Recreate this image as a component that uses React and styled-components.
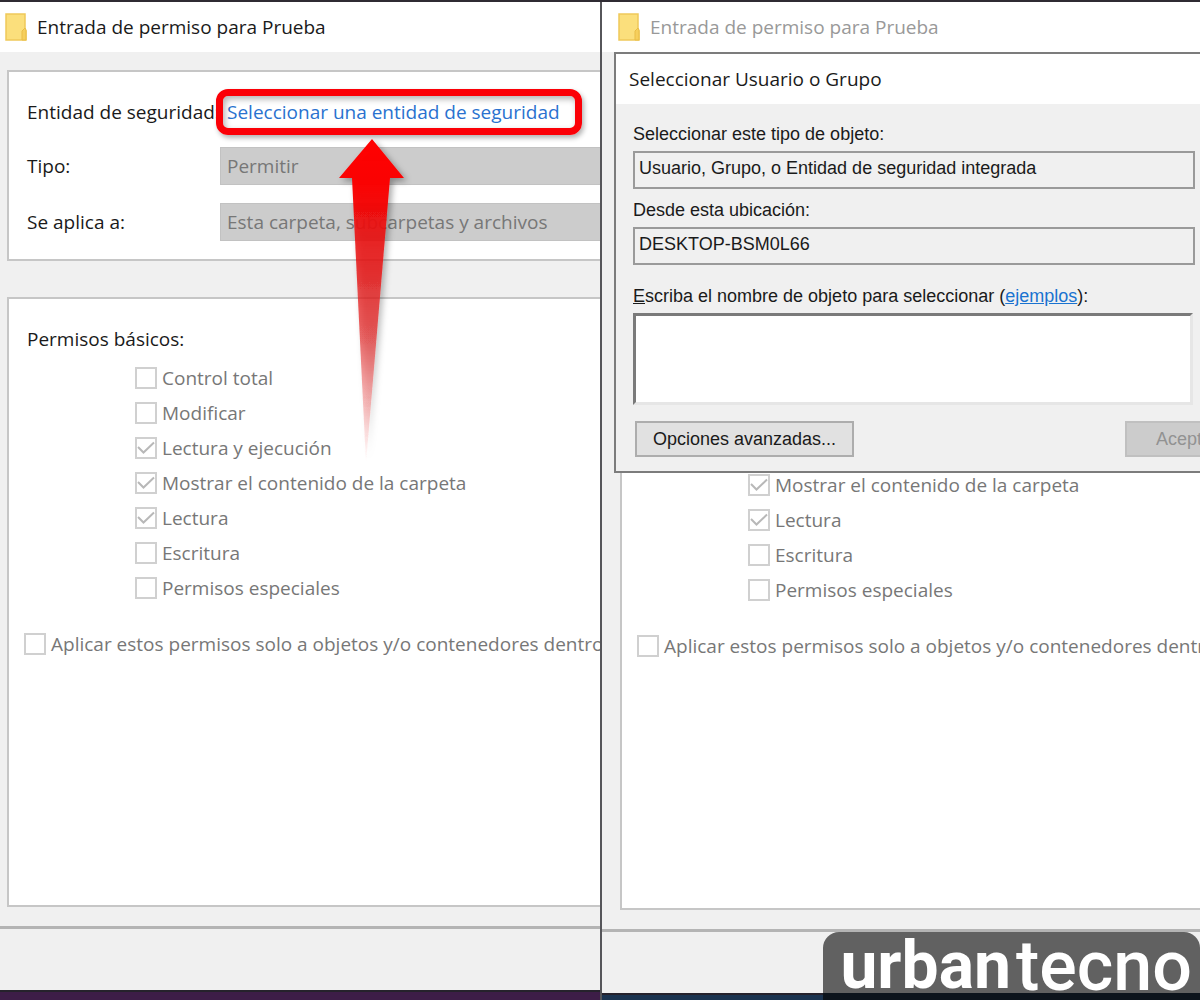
import React, { useId } from "react";
import styled, { createGlobalStyle } from "styled-components";

const GlobalStyle = createGlobalStyle`
  *, *::before, *::after {
    box-sizing: border-box;
  }

  body {
    margin: 0;
    background: #2f2b33;
    font-family: "Open Sans", "Noto Sans", sans-serif;
    font-size: 19px;
    line-height: 24px;
    color: #1a1a1a;
  }

  input, select, textarea, button {
    font: inherit;
    margin: 0;
  }
`;

const Screen = styled("main")`
  display: grid;
  grid-template-columns: minmax(0, 1fr) minmax(0, 1fr);
  min-height: 100vh;
  padding-top: 2px;
`;

const Pane = styled("section")`
  position: relative;
  display: flex;
  flex-direction: column;
  overflow: hidden;
  background: #f0f0f0;
  border-left: ${({ $divided }) => ($divided ? "2px solid #56565a" : "none")};
`;

const Desktop = styled("div")`
  height: ${({ $height }) => $height}px;
  border-top: 2px solid #26222c;
  background: ${({ $color }) => $color};
`;

const TitleBar = styled("header")`
  display: flex;
  align-items: center;
  gap: 10px;
  height: 50px;
  padding-left: ${({ $inset }) => $inset - 2}px;
  background: #fff;
`;

const Title = styled("h1")`
  margin: 0;
  font-size: 19px;
  font-weight: 400;
  color: ${({ $inactive }) => ($inactive ? "#999" : "#1a1a1a")};
`;

const Body = styled("div")`
  flex: 1;
  display: flex;
  flex-direction: column;
  gap: 36px;
  padding: ${({ $top }) => $top}px 0 19px ${({ $inset }) => $inset}px;
`;

const Group = styled("div")`
  flex: ${({ $grow }) => ($grow ? 1 : "none")};
  background: #fff;
  border: 2px solid #c6c6c6;
  border-right: 0;
  white-space: nowrap;
`;

const Entity = styled(Group)`
  display: grid;
  grid-template-columns: 193px minmax(0, 1fr);
  grid-template-rows: 34px 38px 38px;
  align-items: center;
  row-gap: 18px;
  padding: 23px 0 18px 18px;
`;

const LinkCell = styled("div")`
  position: relative;
  padding-left: 7px;
`;

const EntityLink = styled("a")`
  color: #2a72cf;
  text-decoration: none;
`;

const Highlight = styled("span")`
  position: absolute;
  top: -11px;
  left: -4px;
  width: 366px;
  height: 46px;
  border: 7px solid #fb0007;
  border-radius: 12px;
  box-shadow: 2px 3px 5px rgba(0, 0, 0, 0.3), inset 2px 3px 6px rgba(0, 0, 0, 0.3);
  pointer-events: none;
`;

const Select = styled("select")`
  appearance: none;
  width: 100%;
  height: 38px;
  padding: 0 6px;
  border: 1px solid #c2c2c2;
  border-right: 0;
  border-radius: 0;
  background: #ccc;
  color: #777;
  opacity: 1;
`;

const Permissions = styled(Group)`
  padding: 28px 0 0 15px;
`;

const Heading = styled("h2")`
  margin: 0 0 9px 3px;
  font-size: 19px;
  font-weight: 400;
`;

const PermissionList = styled("ul")`
  list-style: none;
  margin: 0 0 21px;
  padding: 0 0 0 111px;
`;

const CheckLabel = styled("label")`
  display: flex;
  align-items: center;
  gap: 5px;
  height: 35px;
  color: #777;
`;

const CheckBox = styled("span")`
  display: grid;
  flex: none;
  width: 22px;
  height: 22px;

  & > * {
    grid-area: 1 / 1;
  }
`;

const CheckInput = styled("input")`
  appearance: none;
  width: 22px;
  height: 22px;
  border: 2px solid #d0d0d0;
  background: #fff;
`;

const Footer = styled("footer")`
  height: 64px;
  border-top: 3px solid #b4b4b4;
`;

const ArrowDrawing = styled("svg")`
  position: absolute;
  top: 131px;
  left: 332px;
  width: 84px;
  height: 336px;
  pointer-events: none;
`;

const Dialog = styled("div")`
  position: absolute;
  top: 50px;
  left: 12px;
  right: 0;
  border: 2px solid #7c7c7c;
  border-right: 0;
  background: #f0f0f0;
  font-family: "Liberation Sans", Arial, sans-serif;
  font-size: 18px;
  white-space: nowrap;
`;

const DialogTitle = styled("h2")`
  display: flex;
  align-items: center;
  height: 50px;
  margin: 0;
  padding-left: 13px;
  background: #fff;
  font-family: "Open Sans", "Noto Sans", sans-serif;
  font-size: 19px;
  font-weight: 400;
`;

const DialogForm = styled("form")`
  display: flex;
  flex-direction: column;
  padding: 18px 5px 14px 17px;
`;

const FieldLabel = styled("label")`
  height: 29px;
`;

const Field = styled("input")`
  height: 38px;
  margin-bottom: 9px;
  padding: 0 4px 4px;
  border: 2px solid #9a9a9a;
  border-radius: 0;
  background: #f0f0f0;
  color: #1a1a1a;
`;

const NamePrompt = styled("div")`
  margin-top: 10px;
  height: 29px;
`;

const ExampleLink = styled("a")`
  color: #1a73d0;
`;

const NameBox = styled("textarea")`
  height: 92px;
  margin-right: 2px;
  resize: none;
  border: 3px solid #e6e6e6;
  border-top-color: #7a7a7a;
  border-left-color: #7a7a7a;
  border-radius: 0;
  background: #fff;
`;

const Actions = styled("div")`
  display: flex;
  justify-content: space-between;
  margin: 16px -54px 0 2px;
`;

const Button = styled("button")`
  width: ${({ $width }) => $width}px;
  height: 36px;
  padding: 0;
  border: 2px solid ${({ disabled }) => (disabled ? "#c0c0c0" : "#adadad")};
  background: ${({ disabled }) => (disabled ? "#ccc" : "#e1e1e1")};
  color: ${({ disabled }) => (disabled ? "#929292" : "#1a1a1a")};
`;

const Watermark = styled("div")`
  position: absolute;
  right: 0;
  bottom: 0;
  display: flex;
  align-items: center;
  gap: 5px;
  height: 68px;
  padding: 0 8px 0 17px;
  border-radius: 16px 16px 0 0;
  background: linear-gradient(#616161 61px, #0d141c 61px);
  color: #fff;
  font-family: Roboto, "Liberation Sans", sans-serif;
  line-height: 68px;
`;

const Brand = styled("span")`
  font-size: ${({ $size }) => $size}px;
  font-weight: ${({ $weight }) => $weight};
`;

const permissions = [
  { name: "Control total", checked: false },
  { name: "Modificar", checked: false },
  { name: "Lectura y ejecución", checked: true },
  { name: "Mostrar el contenido de la carpeta", checked: true },
  { name: "Lectura", checked: true },
  { name: "Escritura", checked: false },
  { name: "Permisos especiales", checked: false },
];

const FolderIcon = () => (
  <svg width="22" height="28" viewBox="0 0 22 28" aria-hidden="true">
    <path d="M1 1h19v15l1 2v9H1z" fill="#fbdf7c" stroke="#efc95a" strokeWidth="1.5" />
    <path d="M17 27v-9l3-3 1 2v10z" fill="#f6cf5c" stroke="#e9bd46" />
  </svg>
);

const Check = ({ name, checked }) => (
  <CheckLabel>
    <CheckBox>
      <CheckInput type="checkbox" defaultChecked={checked} disabled />
      {checked && (
        <svg width="22" height="22" viewBox="0 0 22 22" aria-hidden="true">
          <path d="M3 10l5.500 5.500L19 5.500" fill="none" stroke="#b8b8b8" strokeWidth="2" />
        </svg>
      )}
    </CheckBox>
    {name}
  </CheckLabel>
);

const Arrow = () => (
  <ArrowDrawing viewBox="0 0 84 336" aria-hidden="true">
    <defs>
      <linearGradient id="fade" x1="0" y1="0" x2="0" y2="1">
        <stop offset="0" stopColor="#ff0000" />
        <stop offset="0.14" stopColor="#fb0303" stopOpacity="0.98" />
        <stop offset="0.3" stopColor="#ea0a0a" stopOpacity="0.88" />
        <stop offset="0.6" stopColor="#e02020" stopOpacity="0.68" />
        <stop offset="1" stopColor="#f04040" stopOpacity="0" />
      </linearGradient>
      <filter id="shade" x="-30%" y="-5%" width="170%" height="110%">
        <feDropShadow dx="3" dy="3" stdDeviation="3" floodOpacity="0.35" />
      </filter>
    </defs>
    <path
      d="M40 6L72 45H58L34 330L20 45H7z"
      fill="url(#fade)"
      filter="url(#shade)"
    />
  </ArrowDrawing>
);

const PermissionWindow = ({ inactive, inset, top, linkNote }) => {
  const id = useId();

  return (
    <>
      <TitleBar $inset={inset}>
        <FolderIcon />
        <Title $inactive={inactive}>Entrada de permiso para Prueba</Title>
      </TitleBar>
      <Body $inset={inset} $top={top}>
        <Entity>
          <span>Entidad de seguridad:</span>
          <LinkCell>
            <EntityLink href="#entidad">Seleccionar una entidad de seguridad</EntityLink>
            {linkNote && <Highlight />}
          </LinkCell>
          <label htmlFor={`${id}-type`}>Tipo:</label>
          <Select id={`${id}-type`} disabled>
            <option>Permitir</option>
          </Select>
          <label htmlFor={`${id}-scope`}>Se aplica a:</label>
          <Select id={`${id}-scope`} disabled>
            <option>Esta carpeta, subcarpetas y archivos</option>
          </Select>
        </Entity>
        <Permissions $grow>
          <Heading>Permisos básicos:</Heading>
          <PermissionList>
            {permissions.map(({ name, checked }) => (
              <li key={name}>
                <Check name={name} checked={checked} />
              </li>
            ))}
          </PermissionList>
          <Check name="Aplicar estos permisos solo a objetos y/o contenedores dentro" />
        </Permissions>
      </Body>
      <Footer />
    </>
  );
};

const SelectUserDialog = () => (
  <Dialog role="dialog" aria-labelledby="dialog-title">
    <DialogTitle id="dialog-title">Seleccionar Usuario o Grupo</DialogTitle>
    <DialogForm>
      <FieldLabel htmlFor="object-type">Seleccionar este tipo de objeto:</FieldLabel>
      <Field
        id="object-type"
        readOnly
        value="Usuario, Grupo, o Entidad de seguridad integrada"
      />
      <FieldLabel htmlFor="location">Desde esta ubicación:</FieldLabel>
      <Field id="location" readOnly value="DESKTOP-BSM0L66" />
      <NamePrompt>
        <label htmlFor="object-name">
          <u>E</u>scriba el nombre de objeto para seleccionar
        </label>{" "}
        (<ExampleLink href="#ejemplos">ejemplos</ExampleLink>):
      </NamePrompt>
      <NameBox id="object-name" />
      <Actions>
        <Button type="button" $width={219}>
          Opciones avanzadas...
        </Button>
        <Button type="submit" $width={124} disabled>
          Aceptar
        </Button>
      </Actions>
    </DialogForm>
  </Dialog>
);

export default function App() {
  return (
    <>
      <GlobalStyle />
      <Screen>
        <Pane>
          <PermissionWindow inset={7} top={18} linkNote />
          <Desktop $height={10} $color="#3d1d47" />
          <Arrow />
        </Pane>
        <Pane $divided>
          <PermissionWindow inset={18} top={20} inactive />
          <Desktop $height={7} $color="#1c3450" />
          <SelectUserDialog />
          <Watermark>
            <Brand $size={66} $weight={700}>urban</Brand>
            <Brand $size={70} $weight={500}>tecno</Brand>
          </Watermark>
        </Pane>
      </Screen>
    </>
  );
}
